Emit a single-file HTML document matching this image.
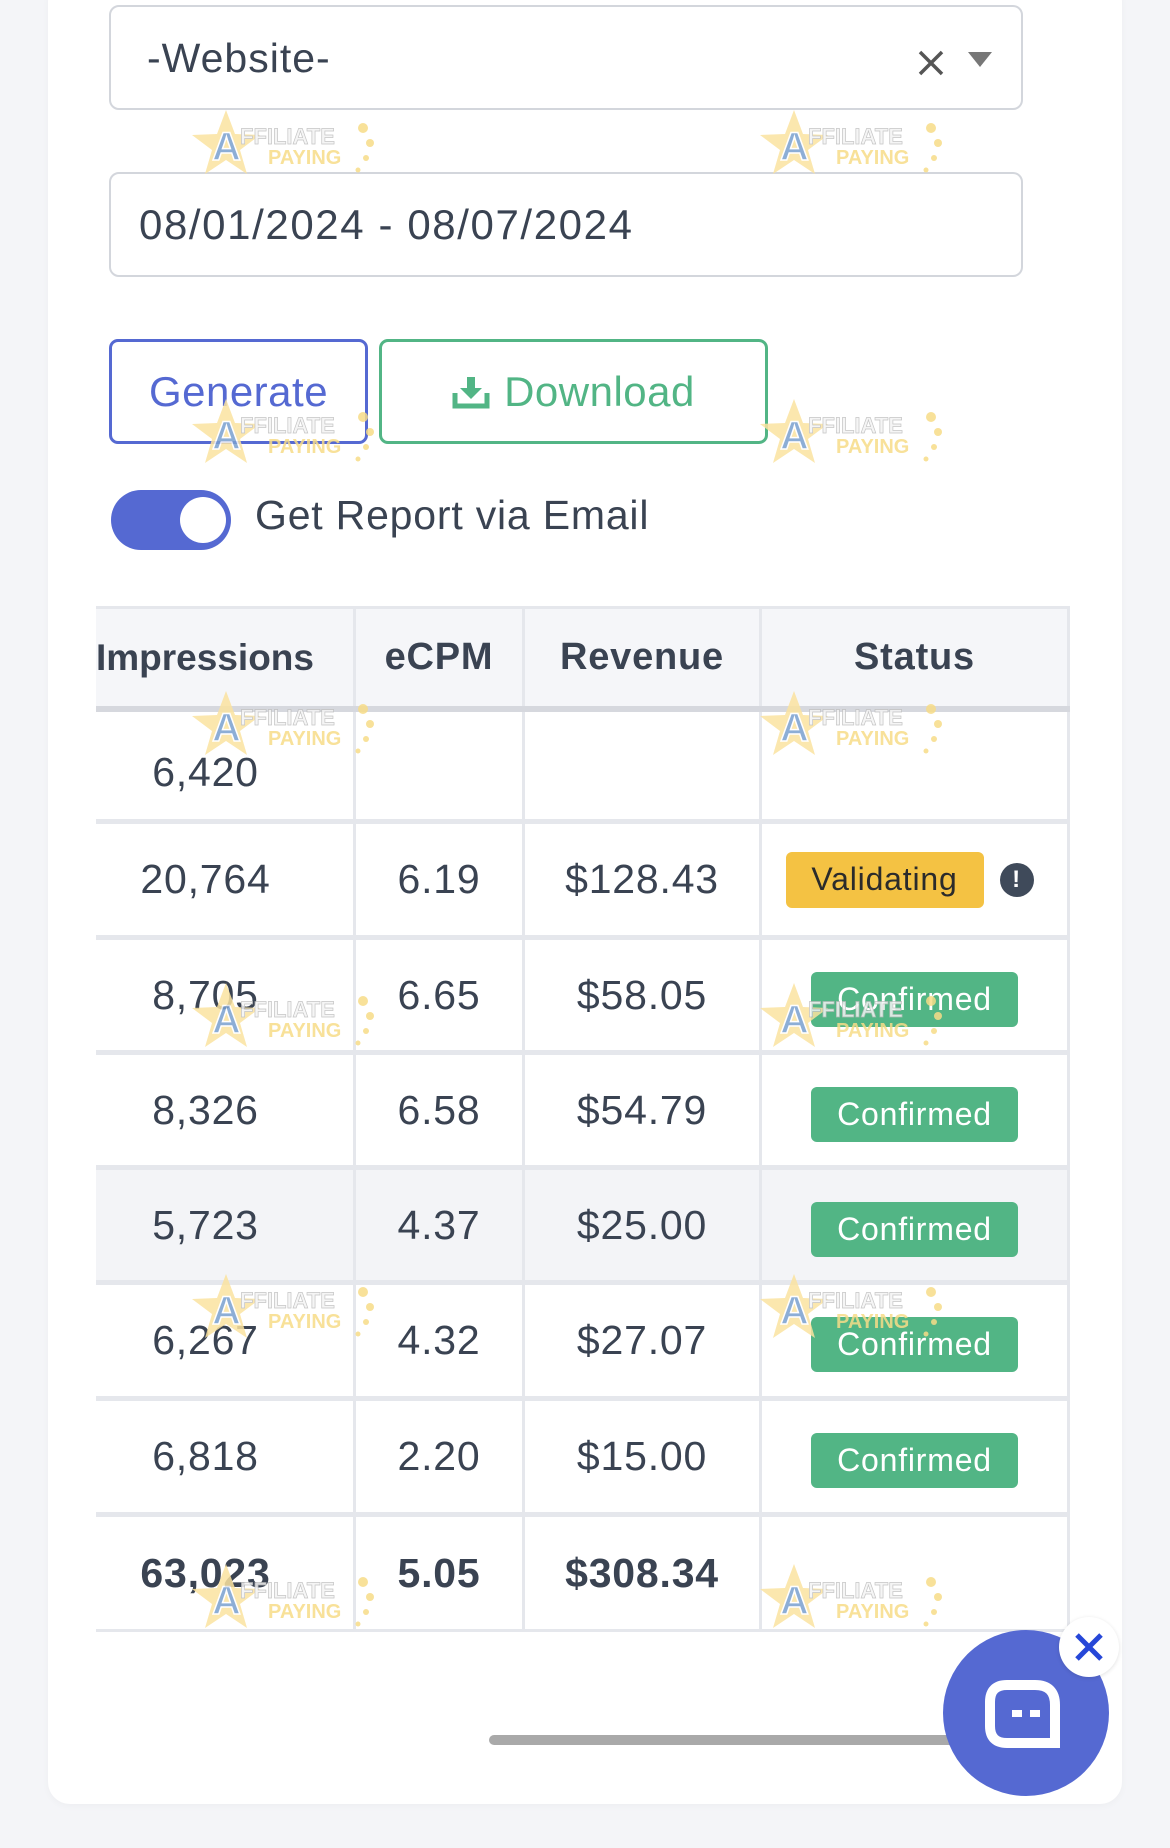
<!DOCTYPE html>
<html><head><meta charset="utf-8"><style>
*{box-sizing:border-box;margin:0;padding:0}
body{width:1170px;height:1848px;background:#f4f5f8;font-family:"Liberation Sans",sans-serif;color:#3a4352;position:relative;overflow:hidden}
.card{position:absolute;left:48px;top:-20px;width:1074px;height:1824px;background:#fff;border-radius:22px;box-shadow:0 2px 8px rgba(0,0,0,.03)}
.inp{position:absolute;left:109px;width:914px;border:2px solid #d3d6dc;border-radius:10px;background:#fff;font-size:41px;color:#3a4352;letter-spacing:1px}
.btn{position:absolute;top:339px;height:105px;border:3px solid;border-radius:9px;font-size:42px;display:flex;align-items:center;justify-content:center;background:#fff;letter-spacing:.5px}
.tbl{position:absolute;left:96px;top:606px;width:974px;overflow:hidden;height:110px}
.row{position:absolute;left:0;width:974px;border-bottom:5px solid #e5e7ec}
.cell{position:absolute;top:0;height:100%;display:flex;align-items:center;justify-content:center;font-size:41px;border-left:3px solid #e5e7ec;letter-spacing:.8px}
.badge{color:#fff;background:#52b585;border-radius:6px;width:207px;height:55px;display:flex;align-items:center;justify-content:center;font-size:32px;letter-spacing:.8px}
.wm{position:absolute;width:200px;height:72px;opacity:.85;pointer-events:none}
</style></head><body>
<div class="card"></div>

<div class="inp" style="top:5px;height:105px">
  <span style="position:absolute;left:36px;top:28px">-Website-</span>
  <svg style="position:absolute;left:806px;top:42px" width="28" height="28" viewBox="0 0 28 28"><path d="M3 3L25 25M25 3L3 25" stroke="#555" stroke-width="3.5"/></svg>
  <svg style="position:absolute;left:857px;top:45px" width="24" height="16" viewBox="0 0 24 16"><path d="M0 0H24L12 15Z" fill="#777"/></svg>
</div>
<div class="inp" style="top:172px;height:105px">
  <span style="position:absolute;left:28px;top:27px;font-size:42px;letter-spacing:1.6px">08/01/2024 - 08/07/2024</span>
</div>

<div class="btn" style="left:109px;width:259px;border-color:#5569d2;color:#5569d2">Generate</div>
<div class="btn" style="left:379px;width:389px;border-color:#52b585;color:#52b585">
  <svg width="38" height="34" viewBox="0 0 38 34" style="margin-right:14px"><path d="M3 18V31H35V18" stroke="#52b585" stroke-width="5" fill="none"/><path d="M15 2H23V13H30L19 24L8 13H15Z" fill="#52b585"/></svg>Download</div>

<div style="position:absolute;left:111px;top:490px;width:120px;height:60px;border-radius:30px;background:#5569d2"></div>
<div style="position:absolute;left:180px;top:497px;width:46px;height:46px;border-radius:50%;background:#fff"></div>
<div style="position:absolute;left:255px;top:492px;font-size:41px;color:#3a4352;letter-spacing:.8px">Get Report via Email</div>

<div class="tbl">
  <div class="row" style="top:0;height:106px;background:#f5f6f9;border-bottom:6px solid #d6d8de;border-top:3px solid #e5e7ec">
    <div class="cell" style="left:0;width:257px;border-left:none;font-weight:bold;font-size:37px;letter-spacing:0;justify-content:flex-start">Impressions</div>
    <div class="cell" style="left:257px;width:169px;font-weight:bold;font-size:38px">eCPM</div>
    <div class="cell" style="left:426px;width:237px;font-weight:bold;font-size:38px">Revenue</div>
    <div class="cell" style="left:663px;width:311px;font-weight:bold;font-size:38px;border-right:3px solid #e5e7ec">Status</div>
  </div>
</div>
<div id="rows"></div>

<div style="position:absolute;left:489px;top:1735px;width:470px;height:10px;border-radius:5px;background:#a9a9a9"></div>
<div style="position:absolute;left:943px;top:1630px;width:166px;height:166px;border-radius:50%;background:#5569d2"></div>
<svg style="position:absolute;left:985px;top:1680px" width="80" height="70" viewBox="0 0 80 70"><path d="M22 5H50Q70 5 70 25V63H22Q5 63 5 46V22Q5 5 22 5Z" fill="none" stroke="#fff" stroke-width="10"/><rect x="27" y="30" width="10" height="7" fill="#fff"/><rect x="45" y="30" width="10" height="7" fill="#fff"/></svg>
<div style="position:absolute;left:1059px;top:1617px;width:60px;height:60px;border-radius:50%;background:#fff;box-shadow:0 1px 4px rgba(0,0,0,.12)"></div>
<svg style="position:absolute;left:1074px;top:1632px" width="30" height="30" viewBox="0 0 30 30"><path d="M3 3L27 27M27 3L3 27" stroke="#2647d8" stroke-width="5"/></svg>

<script>
var rows=[["6,420","","",""],["20,764","6.19","$128.43","V"],["8,705","6.65","$58.05","C"],["8,326","6.58","$54.79","C"],["5,723","4.37","$25.00","C"],["6,267","4.32","$27.07","C"],["6,818","2.20","$15.00","C"],["63,023","5.05","$308.34",""]];
var tops=[712,824,940,1055,1170,1285,1401,1517,1632];
var h="";
rows.forEach(function(r,i){
  var t=tops[i],ht=tops[i+1]-t,bg=i==4?"#f3f4f7":"#fff",fw=i==7?"bold":"normal",bb=i==7?"3px":"5px";
  var st="";
  if(r[3]=="V")st='<div style="display:flex;align-items:center;margin-left:-10px"><div class="badge" style="background:#f4c243;color:#2b2b2b;width:198px;height:56px">Validating</div><div style="width:34px;height:34px;border-radius:50%;background:#3f4a5a;color:#fff;font-weight:bold;font-size:24px;display:flex;align-items:center;justify-content:center;margin-left:16px">!</div></div>';
  else if(r[3]=="C")st='<div class="badge" style="margin-top:8px">Confirmed</div>';
  var pad=i==0?'padding-top:14px;':'';
  h+='<div class="row" style="left:96px;top:'+t+'px;height:'+ht+'px;background:'+bg+';border-bottom-width:'+bb+'">'+
  '<div class="cell" style="'+pad+'left:-38px;width:295px;border-left:none;font-weight:'+fw+'">'+r[0]+'</div>'+
  '<div class="cell" style="left:257px;width:169px;font-weight:'+fw+'">'+r[1]+'</div>'+
  '<div class="cell" style="left:426px;width:237px;font-weight:'+fw+'">'+r[2]+'</div>'+
  '<div class="cell" style="left:663px;width:311px;border-right:3px solid #e5e7ec">'+st+'</div></div>';
});
var wy=[108,397,689,981,1272,1562],wx=[188,756];
wy.forEach(function(y){wx.forEach(function(x){
 h+='<svg class="wm" style="left:'+x+'px;top:'+y+'px" viewBox="0 0 200 72"><path d="M38 2L47 26L72 27L52 42L59 66L38 52L17 66L24 42L4 27L29 26Z" fill="#fbe3a0"/><text x="24" y="52" font-family="Liberation Sans" font-weight="bold" font-size="40" fill="#7aa0d0" stroke="#fff" stroke-width="1.5">A</text><text x="52" y="36" font-family="Liberation Sans" font-weight="bold" font-size="22" fill="#f4f4f4" stroke="#bbb" stroke-width=".7">FFILIATE</text><text x="80" y="56" font-family="Liberation Sans" font-weight="bold" font-size="20" fill="#f7dc88">PAYING</text><circle cx="175" cy="20" r="5" fill="#f7dc88"/><circle cx="182" cy="35" r="4" fill="#f7dc88"/><circle cx="178" cy="50" r="3" fill="#f7dc88"/><circle cx="170" cy="62" r="2.5" fill="#f7dc88"/></svg>';
});});
document.getElementById("rows").innerHTML=h;
</script>
</body></html>
